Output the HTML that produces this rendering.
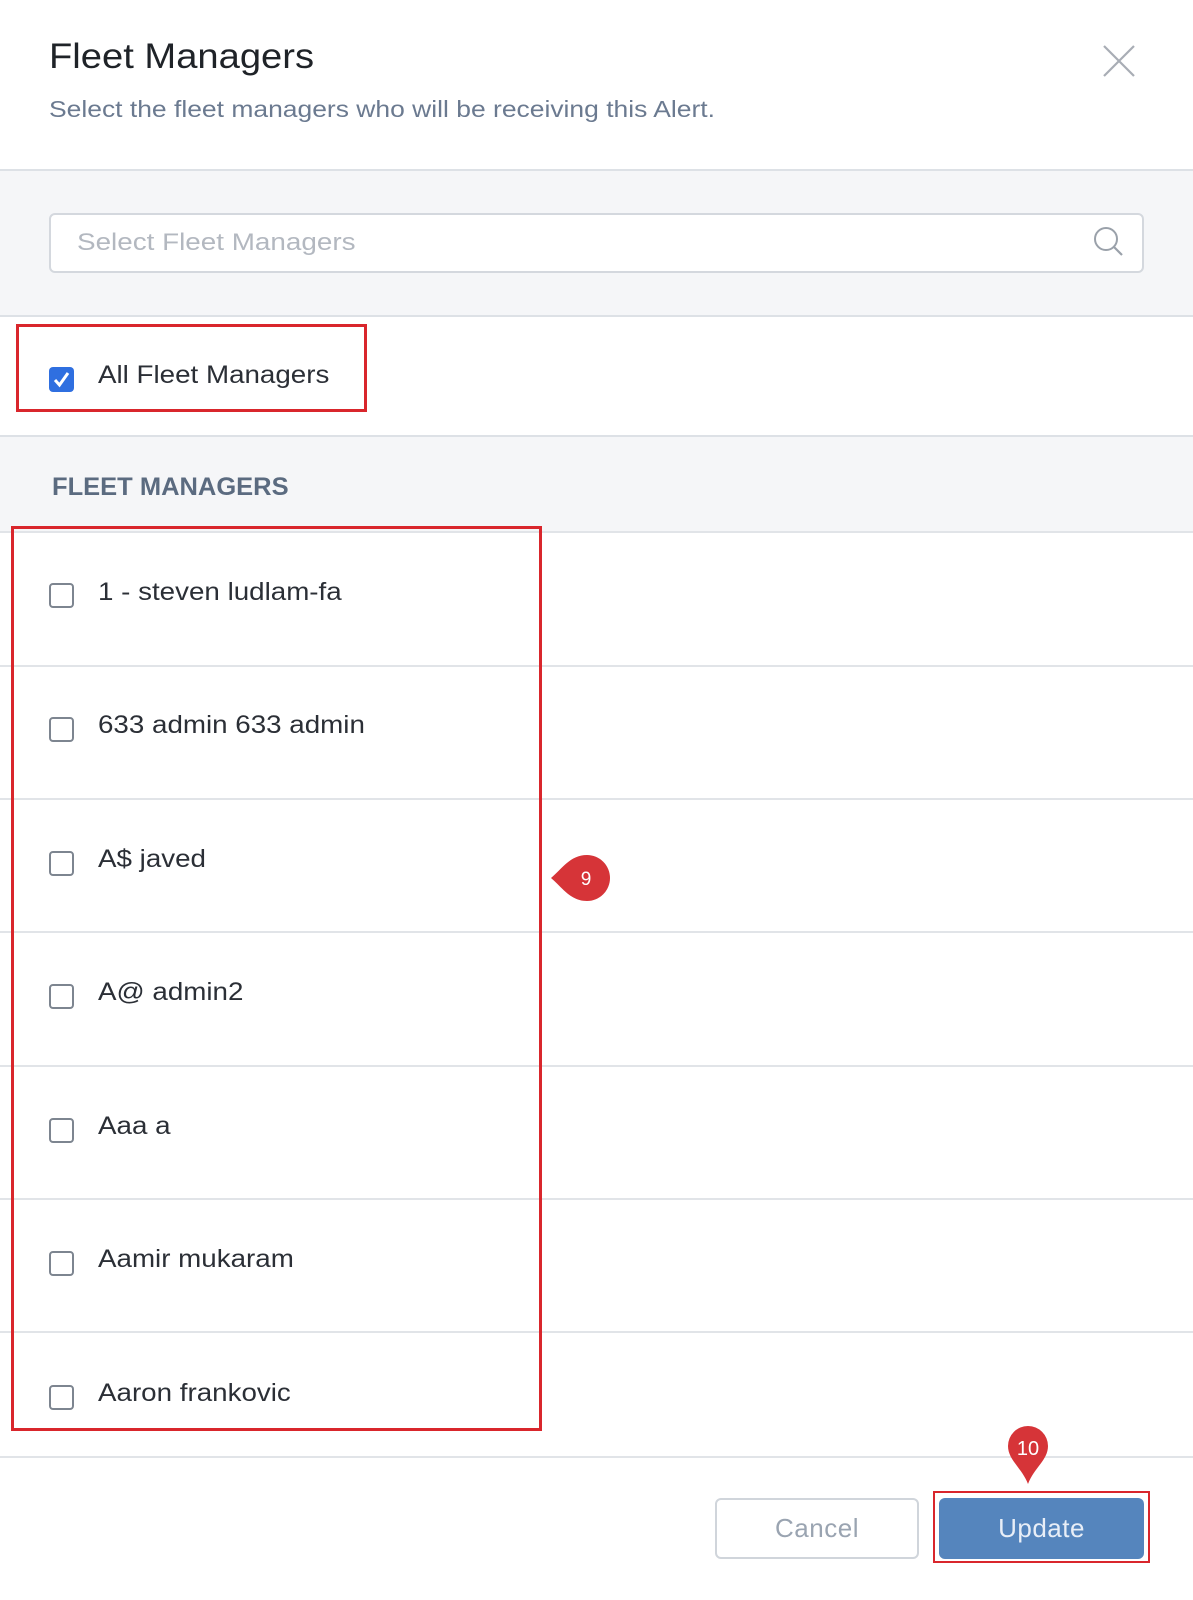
<!DOCTYPE html>
<html><head><meta charset="utf-8"><style>
*{box-sizing:border-box;margin:0;padding:0}
body{width:1193px;height:1600px;background:#fff;font-family:"Liberation Sans",Arial,sans-serif;position:relative;overflow:hidden}
.abs{position:absolute}
.cb{position:absolute;left:49px;width:25px;height:25px;border:2px solid #7d8590;border-radius:4px;background:#fff}
.row{position:absolute;left:0;width:1193px;border-top:2px solid #e1e4e8}
.name{position:absolute;left:98px;font-size:25px;color:#2b2f36;transform:scaleX(1.11);transform-origin:left;white-space:nowrap}
</style></head><body>
<div class="abs" style="left:49px;top:37px;font-size:35px;color:#1f2328;transform:scaleX(1.09);transform-origin:left;white-space:nowrap">Fleet Managers</div>
<div class="abs" style="left:49px;top:96px;font-size:23px;color:#6b7a90;transform:scaleX(1.15);transform-origin:left;white-space:nowrap">Select the fleet managers who will be receiving this Alert.</div>
<svg class="abs" style="left:1102px;top:44px" width="34" height="34"><path d="M2 2L32 32M32 2L2 32" stroke="#a8adb5" stroke-width="2.2"/></svg>

<div class="abs" style="left:0;top:169px;width:1193px;height:148px;background:#f5f6f8;border-top:2px solid #dde1e6;border-bottom:2px solid #dde1e6"></div>
<div class="abs" style="left:49px;top:213px;width:1095px;height:60px;background:#fff;border:2px solid #d4d8de;border-radius:6px"></div>
<div class="abs" style="left:77px;top:229px;font-size:24px;color:#b3b8c0;transform:scaleX(1.16);transform-origin:left;white-space:nowrap">Select Fleet Managers</div>
<svg class="abs" style="left:1093px;top:226px" width="32" height="32"><circle cx="13" cy="13" r="11" fill="none" stroke="#9aa1aa" stroke-width="2"/><path d="M21 21L29 29" stroke="#9aa1aa" stroke-width="2.2"/></svg>

<div class="abs" style="left:0;top:435px;width:1193px;height:98px;background:#f5f6f8;border-top:2px solid #dde1e6;border-bottom:2px solid #e1e4e8"></div>
<div class="abs" style="left:52px;top:473px;font-size:25px;font-weight:bold;color:#5b6b80;transform:scaleX(1.02);transform-origin:left;white-space:nowrap">FLEET MANAGERS</div>

<div class="abs" style="left:49px;top:367px;width:25px;height:25px;background:#2f6fe0;border-radius:4px"></div>
<svg class="abs" style="left:49px;top:367px" width="25" height="25"><path d="M6 13L10.5 18L19 6" stroke="#fff" stroke-width="3" fill="none"/></svg>
<div class="name" style="top:361px">All Fleet Managers</div>
<div class="abs" style="left:16px;top:324px;width:351px;height:88px;border:3px solid #d9262c"></div>

<div class="cb" style="top:583px"></div><div class="name" style="top:578px">1 - steven ludlam-fa</div>
<div class="row" style="top:665px"></div>
<div class="cb" style="top:717px"></div><div class="name" style="top:711px">633 admin 633 admin</div>
<div class="row" style="top:798px"></div>
<div class="cb" style="top:851px"></div><div class="name" style="top:845px">A$ javed</div>
<div class="row" style="top:931px"></div>
<div class="cb" style="top:984px"></div><div class="name" style="top:978px">A@ admin2</div>
<div class="row" style="top:1065px"></div>
<div class="cb" style="top:1118px"></div><div class="name" style="top:1112px">Aaa a</div>
<div class="row" style="top:1198px"></div>
<div class="cb" style="top:1251px"></div><div class="name" style="top:1245px">Aamir mukaram</div>
<div class="row" style="top:1331px"></div>
<div class="cb" style="top:1385px"></div><div class="name" style="top:1379px">Aaron frankovic</div>
<div class="row" style="top:1456px"></div>
<div class="abs" style="left:11px;top:526px;width:531px;height:905px;border:3px solid #d9262c"></div>

<svg class="abs" style="left:548px;top:852px" width="66" height="52"><path d="M3 26C14 17 22 3 39 3A23 23 0 0 1 39 49C22 49 14 35 3 26Z" fill="#d63438"/><text x="38" y="33" font-family="Liberation Sans" font-size="19" fill="#fff" text-anchor="middle">9</text></svg>

<div class="abs" style="left:715px;top:1498px;width:204px;height:61px;border:2px solid #d0d5db;border-radius:6px;background:#fff;text-align:center;line-height:57px;font-size:26px;color:#9aa4b1;letter-spacing:0.5px">Cancel</div>
<div class="abs" style="left:939px;top:1498px;width:205px;height:61px;border-radius:6px;background:#5585bd;text-align:center;line-height:61px;font-size:26px;color:#e8eef7;letter-spacing:0.5px">Update</div>
<div class="abs" style="left:933px;top:1491px;width:217px;height:72px;border:2px solid #d9262c"></div>
<svg class="abs" style="left:1006px;top:1424px" width="44" height="62"><path d="M22 60C16 44 2 36 2 22A20 20 0 0 1 42 22C42 36 28 44 22 60Z" fill="#d63438"/><text x="22" y="31" font-family="Liberation Sans" font-size="20" fill="#fff" text-anchor="middle">10</text></svg>
</body></html>
